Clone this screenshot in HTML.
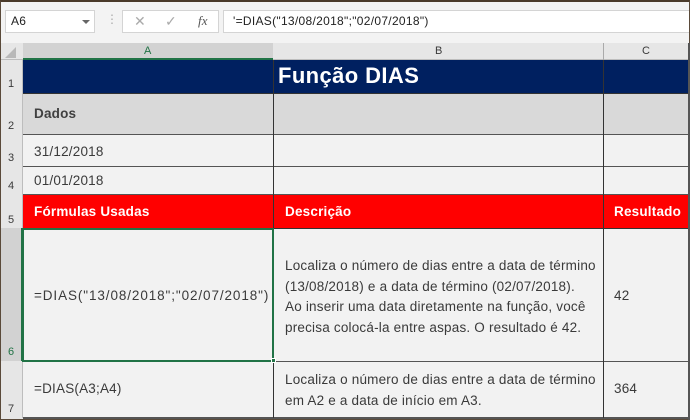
<!DOCTYPE html>
<html><head><meta charset="utf-8"><style>
*{margin:0;padding:0;box-sizing:border-box}
body{width:690px;height:420px;overflow:hidden;background:#e6e6e6;font-family:"Liberation Sans",sans-serif;position:relative;color:#333}
.a{position:absolute}
.t{position:absolute;white-space:nowrap;font-size:13.5px;color:#3a3a3a;letter-spacing:0.2px}
.b{font-weight:bold}
</style></head><body>
<div class="a" style="left:0;top:0;width:690px;height:420px;border:1px solid #5a4a3a;border-top:2px solid #4a3a2a"></div>
<div class="a" style="top:2px;left:1px;width:688px;height:41px;background:#f3f3f3"></div>
<div class="a" style="left:5px;top:10px;width:90px;height:23px;background:#fff;border:1px solid #d4d4d4"></div>
<div class="t" style="left:11px;top:14px;font-size:12px;color:#222">A6</div>
<div class="a" style="left:82px;top:20px;border-left:4px solid transparent;border-right:4px solid transparent;border-top:4px solid #666"></div>
<div class="t" style="left:106px;top:12px;color:#aaa;font-size:12px">⋮</div>
<div class="a" style="left:122px;top:10px;width:97px;height:23px;background:#fff;border:1px solid #d4d4d4"></div>
<div class="t" style="left:134px;top:13px;color:#aaa;font-size:14px">✕</div>
<div class="t" style="left:165px;top:13px;color:#aaa;font-size:14px">✓</div>
<div class="t" style="left:198px;top:13px;color:#555;font-size:13px;font-family:'Liberation Serif',serif;font-style:italic">fx</div>
<div class="a" style="left:223px;top:10px;width:466px;height:23px;background:#fff;border:1px solid #d4d4d4;border-right:none"></div>
<div class="t" style="left:233px;top:14px;font-size:12px;color:#222;letter-spacing:0.3px">'=DIAS("13/08/2018";"02/07/2018")</div>
<div class="a" style="left:1px;top:43px;width:688px;height:17px;background:#e6e6e6;border-bottom:1px solid #bdbdbd"></div>
<div class="a" style="left:23px;top:43px;width:250px;height:17px;background:#d2d2d2;border-bottom:2px solid #217346"></div>
<div class="a" style="left:5px;top:47px;border-left:11px solid transparent;border-bottom:11px solid #b8b8b8"></div>
<div class="t" style="left:144px;top:45px;font-size:11px;color:#217346">A</div>
<div class="t" style="left:435px;top:45px;font-size:11px">B</div>
<div class="t" style="left:642px;top:45px;font-size:11px">C</div>
<div class="a" style="left:603px;top:43px;width:1px;height:17px;background:#aaa"></div>
<div class="a" style="left:1px;top:60px;width:22px;height:358px;background:#e6e6e6;border-right:1px solid #bdbdbd"></div>
<div class="a" style="left:1px;top:228px;width:22px;height:133px;background:#d2d2d2;border-right:2px solid #217346"></div>
<div class="t" style="left:8px;top:78px;font-size:11px">1</div>
<div class="t" style="left:8px;top:120px;font-size:11px">2</div>
<div class="t" style="left:8px;top:152px;font-size:11px">3</div>
<div class="t" style="left:8px;top:180px;font-size:11px">4</div>
<div class="t" style="left:8px;top:214px;font-size:11px">5</div>
<div class="t" style="left:8px;top:346px;font-size:11px;color:#217346">6</div>
<div class="t" style="left:8px;top:403px;font-size:11px">7</div>
<div class="a" style="left:23px;top:60px;width:666px;height:34px;background:#002060;border-bottom:1px solid #333"></div>
<div class="a" style="left:23px;top:94px;width:666px;height:40px;background:#d9d9d9"></div>
<div class="a" style="left:23px;top:134px;width:666px;height:60px;background:#f2f2f2"></div>
<div class="a" style="left:23px;top:194px;width:666px;height:34px;background:#ff0000"></div>
<div class="a" style="left:23px;top:228px;width:666px;height:189px;background:#f2f2f2"></div>
<div class="a" style="left:23px;top:134px;width:666px;height:1px;background:#555"></div>
<div class="a" style="left:23px;top:166px;width:666px;height:1px;background:#555"></div>
<div class="a" style="left:23px;top:194px;width:666px;height:1px;background:#555"></div>
<div class="a" style="left:23px;top:228px;width:666px;height:1px;background:#333"></div>
<div class="a" style="left:23px;top:361px;width:666px;height:1px;background:#555"></div>
<div class="a" style="left:23px;top:417px;width:666px;height:2px;background:#555"></div>
<div class="a" style="left:273px;top:60px;width:1px;height:358px;background:#333"></div>
<div class="a" style="left:603px;top:60px;width:1px;height:358px;background:#333"></div>
<div class="a" style="left:688px;top:43px;width:2px;height:377px;background:#555"></div>
<div class="a" style="left:22px;top:228px;width:252px;height:134px;border:2px solid #217346"></div>
<div class="a" style="left:271px;top:358px;width:5px;height:5px;background:#217346;border:1px solid #fff"></div>
<div class="t b" style="left:278px;top:63px;font-size:22px;color:#fff;letter-spacing:0.4px">Função DIAS</div>
<div class="t b" style="left:34px;top:106px;color:#404040">Dados</div>
<div class="t" style="left:34px;top:144px">31/12/2018</div>
<div class="t" style="left:34px;top:173px">01/01/2018</div>
<div class="t b" style="left:34px;top:204px;color:#fff">Fórmulas Usadas</div>
<div class="t b" style="left:285px;top:204px;color:#fff">Descrição</div>
<div class="t b" style="left:614px;top:204px;color:#fff">Resultado</div>
<div class="t" style="left:34px;top:288px;letter-spacing:0.9px">=DIAS("13/08/2018";"02/07/2018")</div>
<div class="a" style="left:285px;top:256px;font-size:13.5px;letter-spacing:0.2px;line-height:20.5px;color:#3a3a3a;white-space:nowrap">Localiza o número de dias entre a data de término<br>(13/08/2018) e a data de término (02/07/2018).<br>Ao inserir uma data diretamente na função, você<br>precisa colocá-la entre aspas. O resultado é 42.</div>
<div class="t" style="left:614px;top:288px">42</div>
<div class="t" style="left:34px;top:381px">=DIAS(A3;A4)</div>
<div class="a" style="left:285px;top:370px;font-size:13.5px;letter-spacing:0.2px;line-height:20.5px;color:#3a3a3a;white-space:nowrap">Localiza o número de dias entre a data de término<br>em A2 e a data de início em A3.</div>
<div class="t" style="left:614px;top:381px">364</div>
</body></html>
